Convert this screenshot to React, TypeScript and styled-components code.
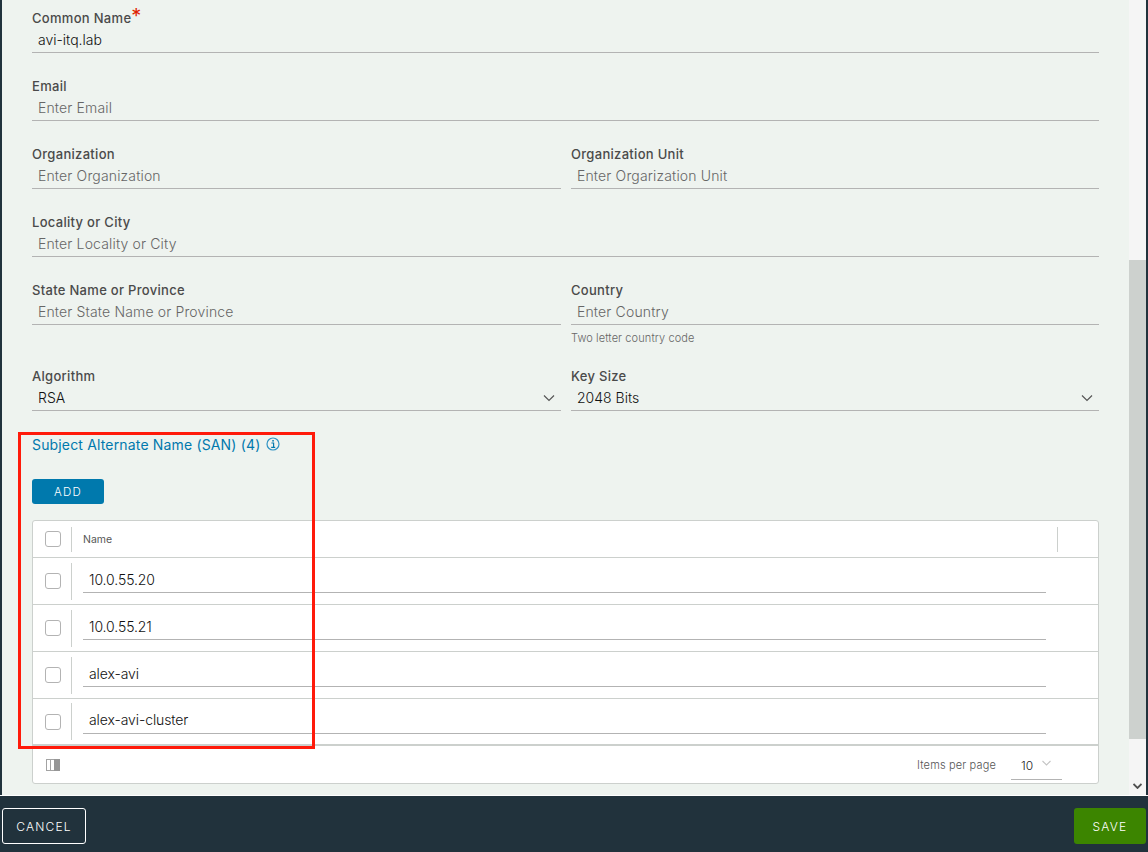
import React from "react";
import styled, { createGlobalStyle } from "styled-components";

const GlobalStyle = createGlobalStyle`
  html, body {
    margin: 0;
    padding: 0;
    background: #21323c;
  }
  * {
    box-sizing: border-box;
  }
`;

const Page = styled.div`
  width: 1148px;
  height: 852px;
  overflow: hidden;
  position: relative;
  display: flex;
  flex-direction: column;
  font-family: Inter, "Liberation Sans", sans-serif;
  background: #21323c;
`;

const Main = styled.div`
  height: 795px;
  padding: 0 2px;
  display: flex;
`;

const Form = styled.div`
  width: 1127px;
  padding: 10px 30px 0;
  background: #eef3ef;
  display: flex;
  flex-direction: column;
`;

const Row = styled.div<{ $hint?: boolean }>`
  display: grid;
  grid-template-columns: 529px 528px;
  column-gap: 10px;
  height: ${(p) => (p.$hint ? 86 : 68)}px;
  align-content: start;
`;

const Field = styled.div<{ $full?: boolean }>`
  grid-column: ${(p) => (p.$full ? "1 / -1" : "auto")};
  min-width: 0;
`;

const Label = styled.div`
  height: 16px;
  font-size: 13px;
  line-height: 17px;
  font-weight: 500;
  letter-spacing: 0.3px;
  color: #4a4a4a;
`;

const Star = styled.span`
  color: #e02200;
  font-size: 20px;
  font-weight: 400;
  line-height: 0;
  vertical-align: 0;
`;

const InputLine = styled.div<{ $placeholder?: boolean }>`
  height: 27px;
  padding: 1px 6px 0;
  display: flex;
  align-items: center;
  justify-content: space-between;
  border-bottom: 1px solid #b3b3b3;
  font-size: 14px;
  font-weight: 300;
  letter-spacing: ${(p) => (p.$placeholder ? 0.15 : 0)}px;
  color: ${(p) => (p.$placeholder ? "#666" : "#111")};
`;

const Hint = styled.div`
  margin-top: 6px;
  font-size: 11px;
  line-height: 14px;
  font-weight: 300;
  letter-spacing: 0.1px;
  color: #666;
`;

const SectionTitle = styled.div`
  display: flex;
  align-items: center;
  gap: 6px;
  height: 20px;
  margin-top: -2px;
  font-size: 14px;
  letter-spacing: 0.16px;
  color: #0079ad;
`;

const AddButton = styled.button`
  display: block;
  width: 72px;
  height: 25px;
  margin-top: 25px;
  border: 0;
  padding: 0;
  border-radius: 3px;
  background: #0079ad;
  color: #fff;
  font-family: inherit;
  font-size: 11.5px;
  font-weight: 300;
  letter-spacing: 1.2px;
`;

const Table = styled.div`
  margin-top: 16px;
  height: 264px;
  border: 1px solid #ccd0cd;
  border-radius: 3px;
  background: #fff;
  display: flex;
  flex-direction: column;
`;

const HeaderRow = styled.div`
  height: 37px;
  flex: none;
  display: flex;
  align-items: center;
  padding-left: 12px;
  border-bottom: 1px solid #ccd0cd;
`;

const BodyRow = styled.div`
  height: 47px;
  flex: none;
  display: flex;
  align-items: center;
  padding-left: 12px;
  border-bottom: 1px solid #ccd0cd;

  &:nth-child(5) {
    border-bottom-width: 2px;
  }
`;

const Check = styled.div`
  width: 16px;
  height: 16px;
  flex: none;
  border: 1px solid #b3b3b3;
  border-radius: 3px;
  background: #fff;
`;

const Divider = styled.div<{ $h: number }>`
  width: 1px;
  height: ${(p) => p.$h}px;
  flex: none;
  margin: 0 11px 0 10px;
  background: #ccd0cd;
`;

const HeadName = styled.div`
  flex: 1;
  font-size: 10.5px;
  color: #565656;
`;

const EndDivider = styled.div`
  width: 1px;
  height: 25px;
  margin-right: 40px;
  background: #ccd0cd;
`;

const CellInput = styled.div`
  width: 963px;
  height: 27px;
  margin-bottom: 3px;
  padding: 0 6px;
  display: flex;
  align-items: center;
  border-bottom: 1px solid #b3b3b3;
  font-size: 14px;
  font-weight: 300;
  letter-spacing: -0.1px;
  color: #111;
`;

const TableFooter = styled.div`
  flex: 1;
  display: flex;
  align-items: center;
  justify-content: space-between;
  padding: 0 36px 0 13px;
`;

const PerPage = styled.div`
  display: flex;
  align-items: center;
  gap: 15px;
  font-size: 11px;
  font-weight: 300;
  letter-spacing: 0.15px;
  color: #555;
`;

const PageSelect = styled.div`
  width: 51px;
  height: 25px;
  margin-top: 5px;
  padding: 0 11px 2px 10px;
  display: flex;
  align-items: center;
  justify-content: space-between;
  border-bottom: 1px solid #b3b3b3;
  font-size: 12px;
  letter-spacing: 0;
  color: #1f1f1f;
`;

const SmallChevron = styled.svg`
  margin: -5px 0 0;
`;

const Scrollbar = styled.div`
  width: 17px;
  flex: none;
  background: #f5f5f5;
  display: flex;
  flex-direction: column;
  align-items: center;
`;

const ScrollSpace = styled.div`
  flex: none;
  height: 260px;
`;

const ScrollThumb = styled.div`
  flex: none;
  width: 17px;
  height: 479px;
  background: #cdd1ce;
`;

const ScrollArrow = styled.svg`
  margin-top: auto;
  margin-bottom: 6px;
`;

const Footer = styled.div`
  flex: 1;
  border-top: 1px solid #fff;
  padding: 12px 2px 8px;
  display: flex;
  justify-content: space-between;
  align-items: stretch;
`;

const CancelButton = styled.button`
  width: 84px;
  border: 1px solid #fff;
  border-radius: 3px;
  padding: 0;
  background: transparent;
  color: #fff;
  font-family: inherit;
  font-size: 12px;
  font-weight: 300;
  letter-spacing: 1.2px;
`;

const SaveButton = styled.button`
  width: 72px;
  border: 0;
  border-radius: 3px;
  padding: 0;
  background: #3c8500;
  color: #fff;
  font-family: inherit;
  font-size: 12px;
  font-weight: 300;
  letter-spacing: 1.2px;
`;

const Annotation = styled.div`
  position: absolute;
  left: 18px;
  top: 432px;
  width: 297px;
  height: 317px;
  border: 3px solid #ff1a0a;
  pointer-events: none;
`;

const Chevron = () => (
  <svg width="12" height="8" viewBox="0 0 12 8" fill="none">
    <path d="M1 1.5 6 6.5 11 1.5" stroke="#565656" strokeWidth="1.2" />
  </svg>
);

const InfoIcon = () => (
  <svg width="14" height="14" viewBox="0 0 14 14" fill="none">
    <circle cx="7" cy="7" r="6" stroke="#2f93c4" strokeWidth="1.2" />
    <rect x="6.3" y="3" width="1.5" height="1.6" fill="#0079ad" />
    <path d="M5.4 6h2.2v4M5.2 10.4h4" stroke="#0079ad" strokeWidth="1.2" />
  </svg>
);

const ColumnsIcon = () => (
  <svg width="14" height="12" viewBox="0 0 14 12">
    <rect x="0.5" y="0.5" width="13" height="11" fill="#fff" stroke="#a3a3a3" />
    <rect x="4" y="0.5" width="1" height="11" fill="#a3a3a3" />
    <rect x="8" y="0" width="6" height="12" fill="#969696" />
  </svg>
);

const names = ["10.0.55.20", "10.0.55.21", "alex-avi", "alex-avi-cluster"];

export default function App() {
  return (
    <Page>
      <GlobalStyle />
      <Main>
        <Form>
          <Row>
            <Field $full>
              <Label>
                Common Name<Star>*</Star>
              </Label>
              <InputLine>avi-itq.lab</InputLine>
            </Field>
          </Row>
          <Row>
            <Field $full>
              <Label>Email</Label>
              <InputLine $placeholder>Enter Email</InputLine>
            </Field>
          </Row>
          <Row>
            <Field>
              <Label>Organization</Label>
              <InputLine $placeholder>Enter Organization</InputLine>
            </Field>
            <Field>
              <Label>Organization Unit</Label>
              <InputLine $placeholder>Enter Orgarization Unit</InputLine>
            </Field>
          </Row>
          <Row>
            <Field $full>
              <Label>Locality or City</Label>
              <InputLine $placeholder>Enter Locality or City</InputLine>
            </Field>
          </Row>
          <Row $hint>
            <Field>
              <Label>State Name or Province</Label>
              <InputLine $placeholder>Enter State Name or Province</InputLine>
            </Field>
            <Field>
              <Label>Country</Label>
              <InputLine $placeholder>Enter Country</InputLine>
              <Hint>Two letter country code</Hint>
            </Field>
          </Row>
          <Row>
            <Field>
              <Label>Algorithm</Label>
              <InputLine>
                RSA
                <Chevron />
              </InputLine>
            </Field>
            <Field>
              <Label>Key Size</Label>
              <InputLine>
                2048 Bits
                <Chevron />
              </InputLine>
            </Field>
          </Row>
          <SectionTitle>
            Subject Alternate Name (SAN) (4)
            <InfoIcon />
          </SectionTitle>
          <AddButton>ADD</AddButton>
          <Table>
            <HeaderRow>
              <Check />
              <Divider $h={25} />
              <HeadName>Name</HeadName>
              <EndDivider />
            </HeaderRow>
            {names.map((name) => (
              <BodyRow key={name}>
                <Check />
                <Divider $h={37} />
                <CellInput>{name}</CellInput>
              </BodyRow>
            ))}
            <TableFooter>
              <ColumnsIcon />
              <PerPage>
                Items per page
                <PageSelect>
                  10
                  <SmallChevron width="9" height="6" viewBox="0 0 9 6" fill="none">
                    <path d="M0.5 1 4.5 5 8.5 1" stroke="#c4c4c4" strokeWidth="1.1" />
                  </SmallChevron>
                </PageSelect>
              </PerPage>
            </TableFooter>
          </Table>
        </Form>
        <Scrollbar>
          <ScrollSpace />
          <ScrollThumb />
          <ScrollArrow width="9" height="6" viewBox="0 0 9 6" fill="none">
            <path d="M0.5 1 4.5 5 8.5 1" stroke="#505050" strokeWidth="1.8" />
          </ScrollArrow>
        </Scrollbar>
      </Main>
      <Footer>
        <CancelButton>CANCEL</CancelButton>
        <SaveButton>SAVE</SaveButton>
      </Footer>
      <Annotation />
    </Page>
  );
}
